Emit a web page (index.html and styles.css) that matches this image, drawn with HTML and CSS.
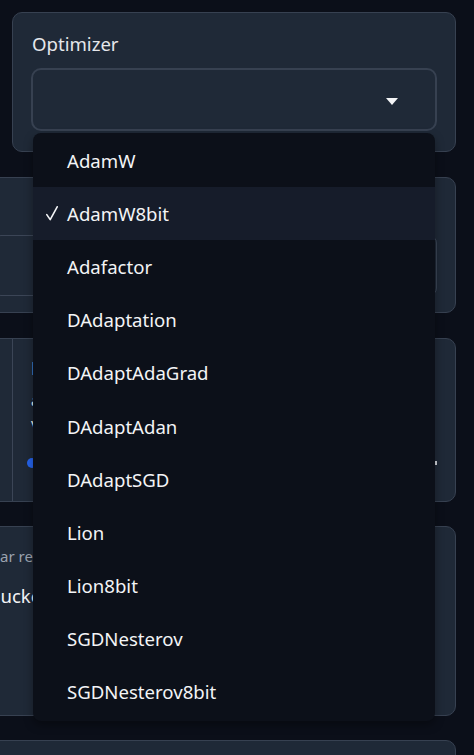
FILE: index.html
```html
<!DOCTYPE html>
<html lang="en">
<head>
<meta charset="utf-8">
<title>Optimizer</title>
<link rel="stylesheet" href="styles.css">
</head>
<body>
<div class="page">
  <div class="block opt">
    <div class="label">Optimizer</div>
    <div class="select-wrap">
      <div class="select">
        <svg class="caret" width="12" height="7" viewBox="0 0 12 7"><path d="M0 0 H12 L6 7 Z" fill="#f3f4f6"/></svg>
      </div>
      <ul class="options">
        <li class="item"><span class="check"></span>AdamW</li>
        <li class="item selected"><span class="check"><svg width="12" height="15" viewBox="0 0 12 15"><path d="M0.8 8.6 L4.2 13.6 L11.2 0.8" fill="none" stroke="#f3f4f6" stroke-width="1.6" stroke-linecap="round" stroke-linejoin="round"/></svg></span>AdamW8bit</li>
        <li class="item"><span class="check"></span>Adafactor</li>
        <li class="item"><span class="check"></span>DAdaptation</li>
        <li class="item"><span class="check"></span>DAdaptAdaGrad</li>
        <li class="item"><span class="check"></span>DAdaptAdan</li>
        <li class="item"><span class="check"></span>DAdaptSGD</li>
        <li class="item"><span class="check"></span>Lion</li>
        <li class="item"><span class="check"></span>Lion8bit</li>
        <li class="item"><span class="check"></span>SGDNesterov</li>
        <li class="item"><span class="check"></span>SGDNesterov8bit</li>
      </ul>
    </div>
  </div>

  <div class="panel p2">
    <div class="inner-box"></div>
  </div>

  <div class="panel p3">
    <div class="col-left"></div>
    <div class="col-right">
      <div class="field-label">LR</div>
      <div class="desc">auto</div>
      <div class="desc">val</div>
      <div class="slider"><span class="thumb"></span></div>
    </div>
  </div>

  <div class="panel p4">
    <div class="placeholder">ar resolution</div>
    <div class="value">bucket</div>
  </div>

  <div class="panel p5"></div>
</div>
</body>
</html>
```

FILE: styles.css
```css
html, body {
  margin: 0;
  padding: 0;
  overflow: hidden;
  background: #0b0f19;
  height: 100%;
}

body {
  font-family: "Noto Sans", "DejaVu Sans", sans-serif;
  color: #f3f4f6;
}

.page {
  display: flex;
  flex-direction: column;
  padding-top: 12px;
}

.block {
  box-sizing: border-box;
  background: #1f2937;
  border: 1px solid #374151;
  border-radius: 10px;
}

.opt {
  margin-left: 12px;
  width: 444px;
  padding: 19px 18px 20px 18px;
}

.label {
  font-size: 18.6px;
  line-height: 24px;
  color: #e5e7eb;
  padding-left: 1px;
}

.select-wrap {
  position: relative;
  margin-top: 12px;
}

.select {
  box-sizing: border-box;
  height: 63px;
  border: 2px solid #374151;
  border-radius: 10px;
  background: #1f2937;
  display: flex;
  align-items: center;
  justify-content: flex-end;
  padding-right: 37px;
  padding-top: 4px;
}

.caret {
  display: block;
}

.options {
  position: absolute;
  z-index: 10;
  top: calc(100% + 2px);
  left: 2px;
  right: 2px;
  margin: 0;
  padding: 1px 0 2px 0;
  list-style: none;
  background: #0c1019;
  border-radius: 8px;
  box-shadow: 0 4px 10px rgba(0, 0, 0, 0.35);
}

.item {
  height: 53.2px;
  display: flex;
  align-items: center;
  padding-left: 13px;
  font-size: 18.6px;
  line-height: 24px;
  color: #f3f4f6;
}

.item.selected {
  background: #161c2a;
}

.check {
  width: 21px;
  flex: none;
  display: flex;
  align-items: center;
  padding-bottom: 1px;
}

.check svg {
  display: block;
}

.panel {
  box-sizing: border-box;
  margin-left: -20px;
  width: 476px;
  background: #1f2937;
  border: 1px solid #374151;
  border-radius: 10px;
}

.p2 {
  margin-top: 25px;
  height: 136px;
  padding: 57px 18px 0 12px;
}

.inner-box {
  height: 61px;
  box-sizing: border-box;
  border: 1px solid #3b4556;
  border-radius: 8px;
}

.p3 {
  margin-top: 25px;
  height: 164px;
  display: flex;
}

.col-left {
  width: 31px;
  border-right: 1px solid #3b4556;
}

.col-right {
  flex: 1;
  padding: 17px 0 0 18px;
}

.field-label {
  font-size: 18px;
  line-height: 24px;
}

.desc {
  font-size: 15px;
  line-height: 23px;
}

.field-label + .desc {
  margin-top: 9px;
}

.slider {
  margin-top: 23px;
  width: 406px;
  height: 10px;
  display: flex;
  align-items: center;
  background: linear-gradient(#d1d5db, #d1d5db) no-repeat center / 100% 4px;
}

.thumb {
  width: 10px;
  height: 10px;
  border-radius: 50%;
  background: #2563eb;
  margin-left: -4px;
}

.p4 {
  margin-top: 24px;
  height: 190px;
  padding: 19px 0 0 19px;
}

.placeholder {
  font-size: 15px;
  line-height: 20px;
  color: #9ca3af;
}

.value {
  margin-top: 18px;
  font-size: 18.6px;
  line-height: 24px;
  text-indent: -11px;
}

.p5 {
  margin-top: 24px;
  height: 100px;
}
```
